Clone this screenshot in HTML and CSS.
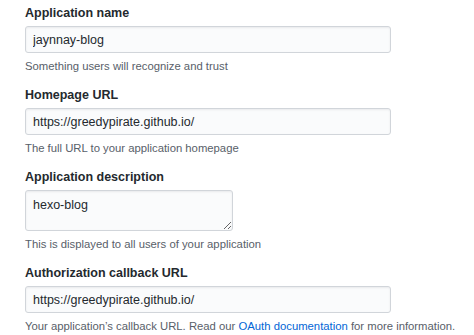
FILE: index.html
```html
<!DOCTYPE html>
<html lang="en">
<head>
    <meta charset="UTF-8">
    <meta name="viewport" content="width=device-width, initial-scale=1.0">
    <title>Register a new OAuth application</title>
    <link rel="stylesheet" href="styles.css">
</head>
<body>
    <form class="app-form">
      <div class="form-group">
        <label for="name">Application name</label>
        <input type="text" id="name" class="form-control" value="jaynnay-blog">
        <p class="note">Something users will recognize and trust</p>
      </div>

      <div class="form-group">
        <label for="url">Homepage URL</label>
        <input type="text" id="url" class="form-control" value="https://greedypirate.github.io/">
        <p class="note">The full URL to your application homepage</p>
      </div>

      <div class="form-group">
        <label for="description">Application description</label>
        <textarea id="description" class="form-control short">hexo-blog</textarea>
        <p class="note">This is displayed to all users of your application</p>
      </div>

      <div class="form-group">
        <label for="callback">Authorization callback URL</label>
        <input type="text" id="callback" class="form-control" value="https://greedypirate.github.io/">
        <p class="note">Your application’s callback URL. Read our <a href="#">OAuth documentation</a> for more information.</p>
      </div>
    </form>
</body>
</html>
```

FILE: styles.css
```css
body {
  margin: 0;
  background-color: #fff;
  color: #24292e;
  font-family: "Liberation Sans", Arial, sans-serif;
}

.app-form {
  padding: 4px 0 0 25px;
}

.form-group {
  margin-bottom: 12px;
}

label {
  display: block;
  font-size: 12.5px;
  font-weight: bold;
  line-height: 18px;
  margin-bottom: 4px;
}

.form-control {
  display: block;
  width: 366px;
  height: 27px;
  padding: 0 7px;
  font-family: inherit;
  font-size: 12.5px;
  color: #24292e;
  background-color: #fafbfc;
  border: 1px solid #d1d5da;
  border-radius: 3px;
  box-shadow: inset 0 1px 2px rgba(27, 31, 35, 0.075);
  box-sizing: border-box;
}

textarea.short {
  width: 208px;
  height: 41px;
  padding: 6px 7px;
  line-height: 16px;
}

.note {
  margin: 5px 0 0;
  font-size: 11.3px;
  line-height: 16px;
  color: #586069;
  white-space: nowrap;
}

.note a {
  color: #0366d6;
  text-decoration: none;
}
```
